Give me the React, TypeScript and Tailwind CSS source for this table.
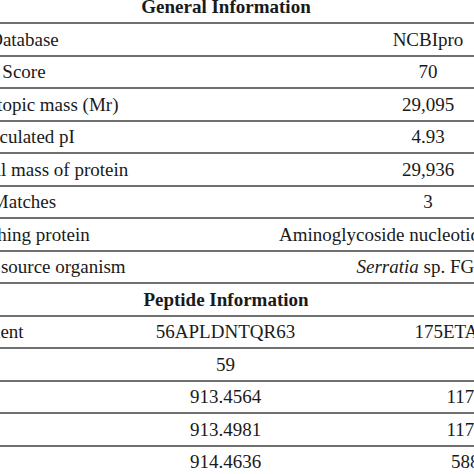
const generalRows = [
  { label: "Database", value: "NCBIpro" },
  { label: "Score", value: "70" },
  { label: "Monoisotopic mass (Mr)", value: "29,095" },
  { label: "Calculated pI", value: "4.93" },
  { label: "Theoretical mass of protein", value: "29,936" },
  { label: "Matches", value: "3" },
  { label: "Matching protein", value: "Aminoglycoside nucleotidyltransferase" },
];

const peptideRows = [
  { label: "Peptide fragment", a: "56APLDNTQR63", b: "175ETALGGR183" },
  { label: "Score", a: "59", b: "41" },
  { label: "Mr(expt)", a: "913.4564", b: "1175.6021" },
  { label: "Mr(calc)", a: "913.4981", b: "1175.5612" },
  { label: "m/z", a: "914.4636", b: "588.8083" },
];

const rowCls =
  "h-[32.5px] border-b-2 border-[#707070] flex items-center";

function SectionTitle({ children }: { children: string }) {
  return (
    <div className={`${rowCls} justify-center font-bold`}>{children}</div>
  );
}

export default function App() {
  return (
    <div className="w-[474px] h-[474px] overflow-hidden bg-white">
      <div className="ml-[-178px] mt-[-8.5px] w-[808px] text-[19px] leading-none text-[#1a1a1a] font-['Liberation_Serif',serif]">
        <SectionTitle>General Information</SectionTitle>
        {generalRows.map((r) => (
          <div key={r.label} className={`${rowCls} grid grid-cols-2`}>
            <div className="text-center whitespace-nowrap">{r.label}</div>
            <div className="text-center whitespace-nowrap">{r.value}</div>
          </div>
        ))}
        <div className={`${rowCls} grid grid-cols-2`}>
          <div className="text-center whitespace-nowrap">
            Identified source organism
          </div>
          <div className="text-center whitespace-nowrap">
            <i>Serratia</i> sp. FGI94
          </div>
        </div>
        <SectionTitle>Peptide Information</SectionTitle>
        {peptideRows.map((r) => (
          <div
            key={r.label}
            className={`${rowCls} grid grid-cols-[273px_261px_261px]`}
          >
            <div className="text-center whitespace-nowrap">{r.label}</div>
            <div className="text-center whitespace-nowrap">{r.a}</div>
            <div className="text-center whitespace-nowrap">{r.b}</div>
          </div>
        ))}
      </div>
    </div>
  );
}
